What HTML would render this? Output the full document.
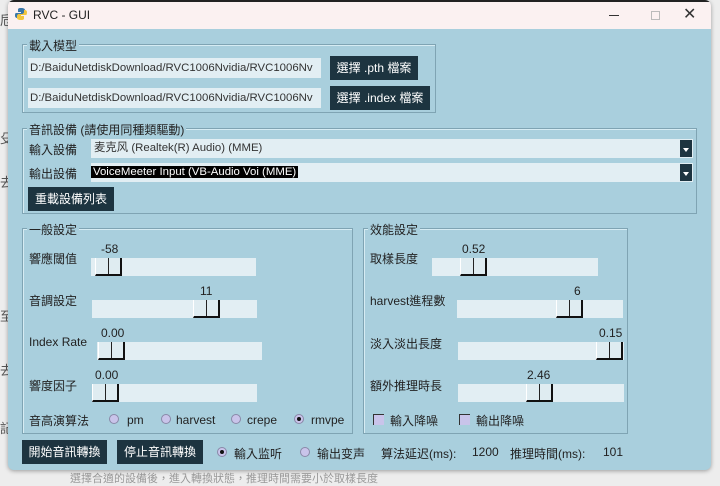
<!DOCTYPE html>
<html><head><meta charset="utf-8"><style>
*{margin:0;padding:0;box-sizing:border-box}
body{width:720px;height:478px;overflow:hidden;background:#ededed;position:relative;font-family:"Liberation Sans","Noto Sans CJK TC",sans-serif;font-size:12px;color:#222}
.a{position:absolute;white-space:nowrap}
#win{position:absolute;left:8px;top:0;width:703px;height:470px;background:#a9cfdd;border-radius:6px;overflow:hidden;box-shadow:0 1px 4px rgba(0,0,0,.35)}
#tb{position:absolute;left:0;top:0;width:100%;height:29px;background:#fbf1f1}
.fs{position:absolute;border:1px solid #7fa4b3;box-shadow:inset 1px 1px 0 #d6ecf3}
.lg{position:absolute;background:#a9cfdd;padding:0 2px;font-size:12px;top:-8px;left:4px}
.ent{position:absolute;background:#e2eef3;height:20px;font-size:11.4px;line-height:20px;padding-left:2px;color:#333;overflow:hidden}
.btn{position:absolute;background:#1d3440;color:#fff;font-size:12px;text-align:center;line-height:24px;height:24px}
.tr{position:absolute;background:#e2eef3;height:18px}
.th{position:absolute;top:0;height:18px;width:27px;background:#dfecf1;border-right:2px solid #111;border-bottom:2px solid #111;border-left:1px solid #fff}
.th:after{content:"";position:absolute;left:12px;top:0;width:1px;height:16px;background:#222}
.val{position:absolute;font-size:12px}
.rd{position:absolute;width:10px;height:10px;border-radius:50%;background:#c9c4ea;border:1px solid #8a88a8}
.rd.on:after{content:"";position:absolute;left:2px;top:2px;width:4px;height:4px;border-radius:50%;background:#111}
.cb{position:absolute;width:11px;height:11px;background:#c9c4ea;border-left:1px solid #333;border-top:1px solid #333}
</style></head><body>
<div class="a" style="left:0;top:10px;font-size:13px;color:#555">卮</div>
<div class="a" style="left:0;top:128px;font-size:13px;color:#555">殳</div>
<div class="a" style="left:0;top:172px;font-size:13px;color:#555">去</div>
<div class="a" style="left:0;top:306px;font-size:13px;color:#555">至</div>
<div class="a" style="left:0;top:360px;font-size:13px;color:#555">去</div>
<div class="a" style="left:0;top:418px;font-size:13px;color:#555">記</div>
<div class="a" style="left:70px;top:470px;font-size:11px;color:#999">選擇合適的設備後，進入轉換狀態，推理時間需要小於取樣長度</div>
<div id="win">
<div id="tb">
 <svg class="a" style="left:6px;top:7px" width="14" height="14" viewBox="0 0 14 14"><path d="M7 1C4 1 4 2 4 3v2h3v1H2C1 6 1 8 1 9s1 2 2 2h1V9c0-1 1-2 2-2h3c1 0 2-1 2-2V3c0-1-1-2-4-2z" fill="#3b77a8"/><path d="M7 13c3 0 3-1 3-2V9H7V8h5c1 0 1-2 1-3s-1-2-2-2h-1v2c0 1-1 2-2 2H5c-1 0-2 1-2 2v2c0 1 1 2 4 2z" fill="#f2c53d"/></svg>
 <div class="a" style="left:25px;top:8px;font-size:12px;color:#222">RVC - GUI</div>
 <div class="a" style="left:601px;top:15px;width:10px;height:1px;background:#333"></div>
 <div class="a" style="left:643px;top:11px;width:9px;height:9px;border:1px solid #bbb"></div>
 <div class="a" style="left:675px;top:4px;font-size:16px;color:#333">✕</div>
</div>
<div class="a" style="left:0;top:0;width:703px;height:2px;background:#222"></div>
<!-- 載入模型 -->
<div class="fs" style="left:14px;top:44px;width:414px;height:69px"><div class="lg">載入模型</div></div>
<div class="ent" style="left:20px;top:58px;width:293px">D:/BaiduNetdiskDownload/RVC1006Nvidia/RVC1006Nv</div>
<div class="btn" style="left:322px;top:56px;width:88px">選擇 .pth 檔案</div>
<div class="ent" style="left:20px;top:88px;width:293px">D:/BaiduNetdiskDownload/RVC1006Nvidia/RVC1006Nv</div>
<div class="btn" style="left:322px;top:86px;width:100px">選擇 .index 檔案</div>
<!-- 音訊 -->
<div class="fs" style="left:14px;top:128px;width:675px;height:86px"><div class="lg">音訊設備 (請使用同種類驅動)</div></div>
<div class="a" style="left:21px;top:141px;font-size:12px">輸入設備</div>
<div class="ent" style="left:83px;top:139px;width:602px;height:19px;line-height:19px;padding-left:3px">麦克风 (Realtek(R) Audio) (MME)</div>
<div class="a" style="left:672px;top:140px;width:12px;height:17px;background:#1d3440"><div class="a" style="left:3px;top:8px;border:3px solid transparent;border-top:4px solid #fff"></div></div>
<div class="a" style="left:21px;top:165px;font-size:12px">輸出設備</div>
<div class="ent" style="left:83px;top:163px;width:602px;height:19px;line-height:19px;padding-left:0"><span style="background:#000;color:#fff;padding:0 2px">VoiceMeeter Input (VB-Audio Voi (MME)</span></div>
<div class="a" style="left:672px;top:164px;width:12px;height:17px;background:#1d3440"><div class="a" style="left:3px;top:8px;border:3px solid transparent;border-top:4px solid #fff"></div></div>
<div class="btn" style="left:20px;top:187px;width:86px">重載設備列表</div>
<!-- 一般設定 -->
<div class="fs" style="left:14px;top:228px;width:331px;height:206px"><div class="lg">一般設定</div></div>
<div class="a" style="left:21px;top:250px">響應閾值</div>
<div class="tr" style="left:83px;top:258px;width:165px"><div class="th" style="left:4px"></div></div>
<div class="val" style="left:93px;top:242px">-58</div>
<div class="a" style="left:21px;top:292px">音調設定</div>
<div class="tr" style="left:84px;top:300px;width:165px"><div class="th" style="left:101px"></div></div>
<div class="val" style="left:192px;top:284px">11</div>
<div class="a" style="left:21px;top:335px">Index Rate</div>
<div class="tr" style="left:89px;top:342px;width:165px"><div class="th" style="left:1px"></div></div>
<div class="val" style="left:93px;top:326px">0.00</div>
<div class="a" style="left:21px;top:377px">響度因子</div>
<div class="tr" style="left:84px;top:384px;width:165px"><div class="th" style="left:0"></div></div>
<div class="val" style="left:87px;top:368px">0.00</div>
<div class="a" style="left:21px;top:412px">音高演算法</div>
<div class="rd" style="left:101px;top:414px"></div><div class="a" style="left:119px;top:413px">pm</div>
<div class="rd" style="left:153px;top:414px"></div><div class="a" style="left:168px;top:413px">harvest</div>
<div class="rd" style="left:223px;top:414px"></div><div class="a" style="left:239px;top:413px">crepe</div>
<div class="rd on" style="left:286px;top:414px"></div><div class="a" style="left:303px;top:413px">rmvpe</div>
<!-- 效能設定 -->
<div class="fs" style="left:355px;top:228px;width:265px;height:206px"><div class="lg">效能設定</div></div>
<div class="a" style="left:362px;top:250px">取樣長度</div>
<div class="tr" style="left:424px;top:258px;width:166px"><div class="th" style="left:28px"></div></div>
<div class="val" style="left:454px;top:242px">0.52</div>
<div class="a" style="left:362px;top:292px">harvest進程數</div>
<div class="tr" style="left:449px;top:300px;width:166px"><div class="th" style="left:99px"></div></div>
<div class="val" style="left:566px;top:284px">6</div>
<div class="a" style="left:362px;top:335px">淡入淡出長度</div>
<div class="tr" style="left:450px;top:342px;width:166px"><div class="th" style="left:138px"></div></div>
<div class="val" style="left:591px;top:326px">0.15</div>
<div class="a" style="left:362px;top:377px">額外推理時長</div>
<div class="tr" style="left:450px;top:384px;width:166px"><div class="th" style="left:68px"></div></div>
<div class="val" style="left:519px;top:368px">2.46</div>
<div class="cb" style="left:365px;top:414px"></div><div class="a" style="left:382px;top:412px">輸入降噪</div>
<div class="cb" style="left:451px;top:414px"></div><div class="a" style="left:468px;top:412px">輸出降噪</div>
<!-- bottom -->
<div class="btn" style="left:14px;top:440px;width:85px">開始音訊轉換</div>
<div class="btn" style="left:109px;top:440px;width:86px">停止音訊轉換</div>
<div class="rd on" style="left:209px;top:447px"></div><div class="a" style="left:226px;top:445px">輸入监听</div>
<div class="rd" style="left:292px;top:447px"></div><div class="a" style="left:309px;top:445px">输出变声</div>
<div class="a" style="left:373px;top:445px">算法延迟(ms):</div>
<div class="a" style="left:464px;top:445px">1200</div>
<div class="a" style="left:502px;top:445px">推理時間(ms):</div>
<div class="a" style="left:595px;top:445px">101</div>
</div>
</body></html>
